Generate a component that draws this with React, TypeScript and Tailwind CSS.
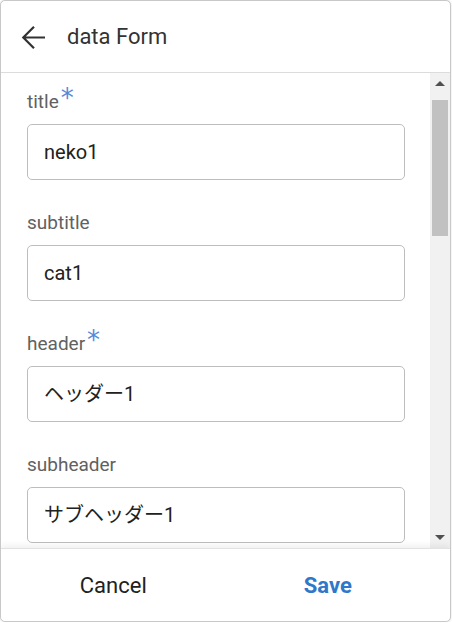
const FONT = { fontFamily: 'Roboto, "Noto Sans CJK JP", sans-serif' };

// ============================================
// Form field (label + boxed text input)
// ============================================

interface FieldProps {
    label: string;
    value: string;
    required?: boolean;
}

function Field({ label, value, required }: FieldProps) {
    return (
        <div className="flex flex-col">
            <div className="flex h-6 items-start mb-[10px]">
                <span className="text-[19px] leading-6 text-[#616161]">{label}</span>
                {required && (
                    <span
                        className="relative -top-[5px] ml-[2px] inline-block text-[26px] leading-none text-[#5589d8]"
                        style={{ fontFamily: '"DejaVu Sans", sans-serif' }}
                    >
                        *
                    </span>
                )}
            </div>
            <div className="flex h-[56px] items-center rounded-[5px] border border-[#bdbdbd] px-4 text-[20px] text-[#212121]">
                {value}
            </div>
        </div>
    );
}

// ============================================
// Fake classic scrollbar
// ============================================

function Scrollbar() {
    return (
        <div className="flex w-[20px] flex-col bg-[#f1f1f1]">
            <div className="flex h-[21px] items-center justify-center">
                <div className="h-0 w-0 border-x-[5px] border-b-[5px] border-x-transparent border-b-[#505050]" />
            </div>
            <div className="flex-1 px-[2px] pt-[6px]">
                <div className="h-[136px] w-full bg-[#c1c1c1]" />
            </div>
            <div className="flex h-[21px] items-center justify-center">
                <div className="h-0 w-0 border-x-[5px] border-t-[5px] border-x-transparent border-t-[#505050]" />
            </div>
        </div>
    );
}

export default function App() {
    const fields: FieldProps[] = [
        { label: "title", value: "neko1", required: true },
        { label: "subtitle", value: "cat1" },
        { label: "header", value: "ヘッダー1", required: true },
        { label: "subheader", value: "サブヘッダー1" },
    ];

    return (
        <div className="bg-white" style={FONT}>
            <div className="flex h-[622px] w-[451px] flex-col overflow-hidden rounded-[5px] border border-[#c8c8c8] bg-white shadow-[0_0_2px_rgba(0,0,0,0.15)]">
                {/* Header */}
                <div className="flex h-[72px] shrink-0 items-center gap-[22px] border-b border-[#dcdcdc] pl-[20px]">
                    <svg width="24" height="24" viewBox="0 0 24 24" fill="none" stroke="#333" strokeWidth="2.2" className="mt-[2px]">
                        <path d="M24 11.5H2.5 M13 0.8 L2.3 11.5 L13 22.2" />
                    </svg>
                    <span className="text-[22px] text-[#333333]">data Form</span>
                </div>

                {/* Scrolling body */}
                <div className="flex h-[475px] shrink-0">
                    <div className="flex flex-1 flex-col gap-[31px] overflow-hidden pl-[26px] pr-[25px] pt-[17px]">
                        {fields.map((f) => (
                            <Field key={f.label} {...f} />
                        ))}
                    </div>
                    <Scrollbar />
                </div>

                {/* Footer */}
                <div className="relative z-10 grid h-[73px] shrink-0 grid-cols-2 items-center border-t border-[#e2e2e2] pl-[5px] pr-[15px] text-[22px] shadow-[0_-3px_6px_rgba(0,0,0,0.06)]">
                    <button className="text-center text-[#212121]">Cancel</button>
                    <button className="text-center font-bold text-[#2f77c9]">Save</button>
                </div>
            </div>
        </div>
    );
}
